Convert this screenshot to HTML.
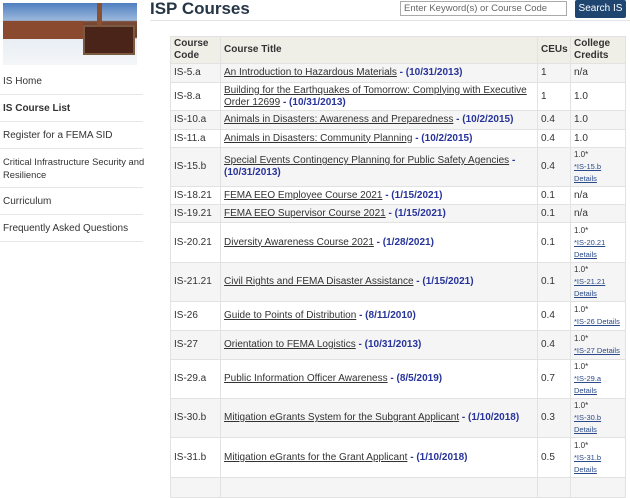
<!DOCTYPE html>
<html><head><style>
*{margin:0;padding:0;box-sizing:border-box}
body{width:630px;height:480px;overflow:hidden;background:#fff;font-family:"Liberation Sans",Arial,sans-serif;color:#333;position:relative}
.img{position:absolute;left:3px;top:3px;width:134px;height:62px;overflow:hidden;background:linear-gradient(#4f7fc0 0%,#9ab8dc 28%,#7a4a35 30%,#6b3b2a 55%,#e8eef4 58%,#f4f6f8 100%)}
.nav{position:absolute;left:0;width:143px;font-size:10px;color:#333;padding-left:3px;border-bottom:1px solid #e6e6e6;white-space:nowrap}
h1{position:absolute;left:150px;top:-1px;font-size:17px;color:#263646;font-weight:bold}
.hr{position:absolute;left:150px;top:20px;width:480px;height:1px;background:#e4e4e4}
.inp{position:absolute;left:400px;top:1px;width:167px;height:15px;border:1px solid #aaa;font-size:9.5px;color:#666;padding:1px 3px}
.btn{position:absolute;left:575px;top:0;width:51px;height:18px;background:#1f4671;color:#fff;font-size:10px;text-align:center;line-height:17px;border-radius:2px}
table{position:absolute;left:170px;top:36px;width:455px;border-collapse:collapse;font-size:10px;table-layout:fixed}
td,th{border:1px solid #e2e2e2;padding:0 3px;vertical-align:middle;text-align:left;line-height:12px}
th{background:#f0efe7;font-weight:bold;color:#333;line-height:12px}
tr:nth-child(even) td{background:#f5f5f5}
a{color:#333;text-decoration:underline}
b.d{color:#27339a}
.c{font-size:8px;line-height:12px}
.c a{color:#2a4a8a;font-size:7.5px}
</style></head><body>
<div class="img">
<div style="position:absolute;left:0;top:18px;width:80px;height:18px;background:#8a4a30"></div>
<div style="position:absolute;left:80px;top:22px;width:52px;height:30px;background:#4a2418;border:2px solid #7a5a40"></div>
<div style="position:absolute;left:94px;top:0;width:5px;height:24px;background:#8a5030"></div>
</div>
<div class="nav" style="top:68px;height:27px;line-height:27px">IS Home</div>
<div class="nav" style="top:95px;height:27px;line-height:27px;font-weight:bold">IS Course List</div>
<div class="nav" style="top:122px;height:27px;line-height:27px">Register for a FEMA SID</div>
<div class="nav" style="top:149px;height:39px;line-height:13px;padding-top:6px;font-size:9.4px">Critical Infrastructure Security and<br>Resilience</div>
<div class="nav" style="top:188px;height:27px;line-height:27px">Curriculum</div>
<div class="nav" style="top:215px;height:27px;line-height:27px">Frequently Asked Questions</div>
<h1>ISP Courses</h1>
<div class="hr"></div>
<div class="inp">Enter Keyword(s) or Course Code</div>
<div class="btn">Search IS</div>
<table>
<colgroup><col style="width:50px"><col style="width:317px"><col style="width:33px"><col style="width:55px"></colgroup>
<tr style="height:27px"><th>Course Code</th><th>Course Title</th><th>CEUs</th><th>College Credits</th></tr>
<tr style="height:19px"><td>IS-5.a</td><td><a>An Introduction to Hazardous Materials</a> <b class="d">- (10/31/2013)</b></td><td>1</td><td>n/a</td></tr>
<tr style="height:28px"><td>IS-8.a</td><td><a>Building for the Earthquakes of Tomorrow: Complying with Executive Order 12699</a> <b class="d">- (10/31/2013)</b></td><td>1</td><td>1.0</td></tr>
<tr style="height:19px"><td>IS-10.a</td><td><a>Animals in Disasters: Awareness and Preparedness</a> <b class="d">- (10/2/2015)</b></td><td>0.4</td><td>1.0</td></tr>
<tr style="height:18px"><td>IS-11.a</td><td><a>Animals in Disasters: Community Planning</a> <b class="d">- (10/2/2015)</b></td><td>0.4</td><td>1.0</td></tr>
<tr style="height:39px"><td>IS-15.b</td><td><a>Special Events Contingency Planning for Public Safety Agencies</a> <b class="d">- (10/31/2013)</b></td><td>0.4</td><td class="c">1.0*<br><a>*IS-15.b Details</a></td></tr>
<tr style="height:18px"><td>IS-18.21</td><td><a>FEMA EEO Employee Course 2021</a> <b class="d">- (1/15/2021)</b></td><td>0.1</td><td>n/a</td></tr>
<tr style="height:18px"><td>IS-19.21</td><td><a>FEMA EEO Supervisor Course 2021</a> <b class="d">- (1/15/2021)</b></td><td>0.1</td><td>n/a</td></tr>
<tr style="height:40px"><td>IS-20.21</td><td><a>Diversity Awareness Course 2021</a> <b class="d">- (1/28/2021)</b></td><td>0.1</td><td class="c">1.0*<br><a>*IS-20.21 Details</a></td></tr>
<tr style="height:39px"><td>IS-21.21</td><td><a>Civil Rights and FEMA Disaster Assistance</a> <b class="d">- (1/15/2021)</b></td><td>0.1</td><td class="c">1.0*<br><a>*IS-21.21 Details</a></td></tr>
<tr style="height:29px"><td>IS-26</td><td><a>Guide to Points of Distribution</a> <b class="d">- (8/11/2010)</b></td><td>0.4</td><td class="c">1.0*<br><a>*IS-26 Details</a></td></tr>
<tr style="height:29px"><td>IS-27</td><td><a>Orientation to FEMA Logistics</a> <b class="d">- (10/31/2013)</b></td><td>0.4</td><td class="c">1.0*<br><a>*IS-27 Details</a></td></tr>
<tr style="height:39px"><td>IS-29.a</td><td><a>Public Information Officer Awareness</a> <b class="d">- (8/5/2019)</b></td><td>0.7</td><td class="c">1.0*<br><a>*IS-29.a Details</a></td></tr>
<tr style="height:39px"><td>IS-30.b</td><td><a>Mitigation eGrants System for the Subgrant Applicant</a> <b class="d">- (1/10/2018)</b></td><td>0.3</td><td class="c">1.0*<br><a>*IS-30.b Details</a></td></tr>
<tr style="height:40px"><td>IS-31.b</td><td><a>Mitigation eGrants for the Grant Applicant</a> <b class="d">- (1/10/2018)</b></td><td>0.5</td><td class="c">1.0*<br><a>*IS-31.b Details</a></td></tr>
<tr style="height:20px"><td></td><td></td><td></td><td></td></tr>
</table>
</body></html>
